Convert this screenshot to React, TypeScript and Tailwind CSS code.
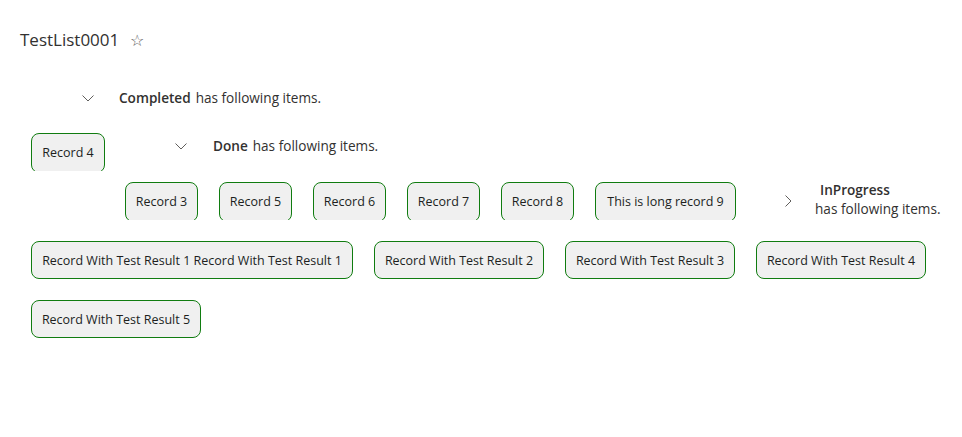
const font = { fontFamily: '"Segoe UI", "Open Sans", "Noto Sans", sans-serif' };

const ChevronDown = () => (
  <svg width="12" height="7" viewBox="0 0 12 7" className="block">
    <path d="M0.5 0.5 L6 6 L11.5 0.5" fill="none" stroke="#605e5c" strokeWidth="1" />
  </svg>
);

const ChevronRight = () => (
  <svg width="7" height="12" viewBox="0 0 7 12" className="block">
    <path d="M0.5 0.5 L6 6 L0.5 11.5" fill="none" stroke="#605e5c" strokeWidth="1" />
  </svg>
);

interface RecordProps {
  label: string;
  width: string;
  clipped?: boolean;
}

const Record: React.FC<RecordProps> = ({ label, width, clipped = false }) => (
  <div className={`${width} h-[38px] ${clipped ? "overflow-hidden" : ""} shrink-0`}>
    <button
      className={`w-full ${
        clipped ? "h-[40px] pt-[1px]" : "h-[38px] pt-[2px]"
      } rounded-[8px] border border-[#107c10] bg-[#f0f0f0] text-[12.5px] text-[#201f1e] whitespace-nowrap`}
    >
      {label}
    </button>
  </div>
);

const GroupHeader = ({ name, chevronW }: { name: string; chevronW: string }) => (
  <div className="flex items-center h-[20px] text-[13.6px] text-[#323130] whitespace-nowrap">
    <div className={`${chevronW} flex items-center`}>
      <ChevronDown />
    </div>
    <span className="ml-[5px] font-semibold">{name}</span>
    <span className="ml-[5px]">has following items.</span>
  </div>
);

export default function App() {
  return (
    <div className="w-[962px] h-[437px] bg-white pt-[29px]" style={font}>
      <div className="flex items-center pl-[20px] h-[22px]">
        <h1 className="text-[17px] leading-[22px] text-[#323130]">TestList0001</h1>
        <span className="ml-[11px] text-[16px] leading-[22px] text-[#605e5c]">☆</span>
      </div>

      <div className="mt-[37px] pl-[82px]">
        <GroupHeader name="Completed" chevronW="w-[32px]" />
      </div>

      <div className="mt-[25px] flex items-start pl-[31px]">
        <Record label="Record 4" width="w-[74px]" clipped />
        <div className="ml-[70px] mt-[3px]">
          <GroupHeader name="Done" chevronW="w-[33px]" />
        </div>
      </div>

      <div className="mt-[11px] flex items-start pl-[125px]">
        <div className="flex gap-[21px]">
          <Record label="Record 3" width="w-[73px]" clipped />
          <Record label="Record 5" width="w-[73px]" clipped />
          <Record label="Record 6" width="w-[73px]" clipped />
          <Record label="Record 7" width="w-[73px]" clipped />
          <Record label="Record 8" width="w-[73px]" clipped />
          <Record label="This is long record 9" width="w-[141px]" clipped />
        </div>
        <div className="ml-[49px] flex items-center h-[38px]">
          <div className="w-[30px] flex items-center">
            <ChevronRight />
          </div>
          <div className="flex flex-col text-[13.6px] leading-[19px] text-[#323130] whitespace-nowrap -mt-[4px]">
            <span className="ml-[5px] font-semibold">InProgress</span>
            <span>has following items.</span>
          </div>
        </div>
      </div>

      <div className="mt-[21px] flex flex-wrap gap-x-[21px] gap-y-[21px] pl-[31px] w-[950px]">
        <Record label="Record With Test Result 1 Record With Test Result 1" width="w-[322px]" />
        <Record label="Record With Test Result 2" width="w-[170px]" />
        <Record label="Record With Test Result 3" width="w-[170px]" />
        <Record label="Record With Test Result 4" width="w-[170px]" />
        <Record label="Record With Test Result 5" width="w-[170px]" />
      </div>
    </div>
  );
}
